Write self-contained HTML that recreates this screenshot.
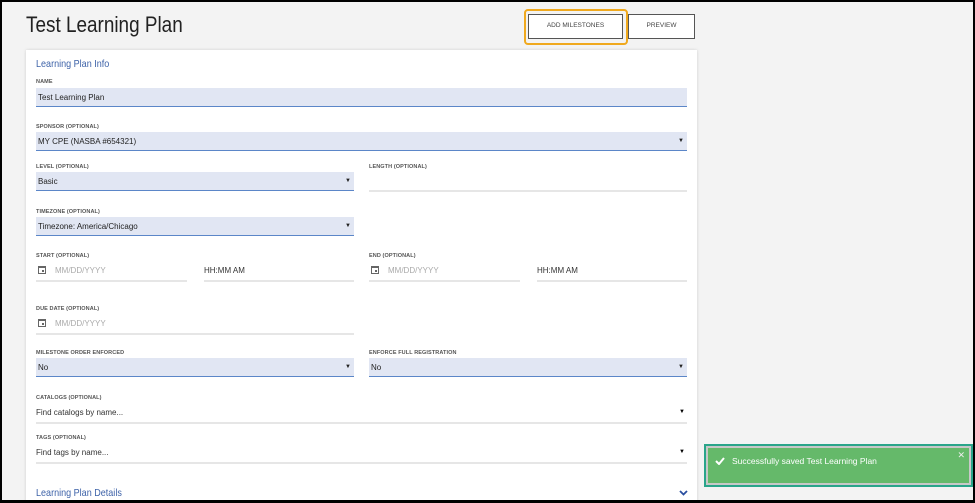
<!DOCTYPE html>
<html><head><style>
*{margin:0;padding:0;box-sizing:border-box}
body{width:975px;height:503px;overflow:hidden;background:#000;font-family:"Liberation Sans",sans-serif;position:relative}
#pg{position:absolute;left:2px;top:2px;width:971px;height:498px;background:#f3f3f3;overflow:hidden}
.a{position:absolute}
.lbl{position:absolute;font-size:5.5px;font-weight:bold;color:#555;letter-spacing:.1px}
.fld{position:absolute;background:#e1e6f3;border-bottom:1.5px solid #5b86c8;height:19px;font-size:8px;color:#222;padding:5px 0 0 2px}
.arr{position:absolute;right:3px;top:6px;font-size:6px;color:#222}
.ul{position:absolute;height:1.5px;background:#e6e6e6}
.ph{position:absolute;font-size:8px;color:#aaa}
.txt{position:absolute;font-size:8px;color:#333}
.cal{position:absolute;width:8px;height:8px;border:1.3px solid #666;border-top-width:2.5px}
.cal:after{content:"";position:absolute;right:1px;bottom:1px;width:2px;height:2px;background:#666}
.nar{transform-origin:0 0;transform:scaleX(.86);white-space:nowrap}
</style></head><body><div id="pg">
<div class="a nar" style="left:24px;top:10px;font-size:22px;color:#222">Test Learning Plan</div>
<div class="a" style="left:522px;top:7px;width:104px;height:36px;border:2px solid #f0a91e;border-radius:4px"></div>
<div class="a" style="left:526px;top:12px;width:95px;height:25px;border:1.5px solid #555;background:#fff;font-size:6.5px;color:#444;text-align:center;line-height:22px">ADD MILESTONES</div>
<div class="a" style="left:626px;top:12px;width:67px;height:25px;border:1.5px solid #555;background:#fff;font-size:6.5px;color:#444;text-align:center;line-height:22px">PREVIEW</div>
<div class="a" style="left:24px;top:48px;width:671px;height:460px;background:#fff;box-shadow:0 0 3px rgba(0,0,0,.15)"></div>
<div class="a nar" style="left:34px;top:56px;font-size:10.5px;color:#3d62a8">Learning Plan Info</div>

<div class="lbl" style="left:34px;top:77px">NAME</div>
<div class="fld" style="left:34px;top:86px;width:651px">Test Learning Plan</div>

<div class="lbl" style="left:34px;top:122px">SPONSOR (OPTIONAL)</div>
<div class="fld" style="left:34px;top:130px;width:651px">MY CPE (NASBA #654321)<span class="arr">▼</span></div>

<div class="lbl" style="left:34px;top:162px">LEVEL (OPTIONAL)</div>
<div class="fld" style="left:34px;top:170px;width:318px">Basic<span class="arr">▼</span></div>
<div class="lbl" style="left:367px;top:162px">LENGTH (OPTIONAL)</div>
<div class="ul" style="left:367px;top:188px;width:318px"></div>

<div class="lbl" style="left:34px;top:207px">TIMEZONE (OPTIONAL)</div>
<div class="fld" style="left:34px;top:215px;width:318px">Timezone: America/Chicago<span class="arr">▼</span></div>

<div class="lbl" style="left:34px;top:251px">START (OPTIONAL)</div>
<div class="cal" style="left:36px;top:264px"></div>
<div class="ph" style="left:53px;top:264px">MM/DD/YYYY</div>
<div class="ul" style="left:34px;top:278px;width:151px"></div>
<div class="txt" style="left:202px;top:264px">HH:MM AM</div>
<div class="ul" style="left:202px;top:278px;width:150px"></div>
<div class="lbl" style="left:367px;top:251px">END (OPTIONAL)</div>
<div class="cal" style="left:369px;top:264px"></div>
<div class="ph" style="left:386px;top:264px">MM/DD/YYYY</div>
<div class="ul" style="left:367px;top:278px;width:151px"></div>
<div class="txt" style="left:535px;top:264px">HH:MM AM</div>
<div class="ul" style="left:535px;top:278px;width:150px"></div>

<div class="lbl" style="left:34px;top:304px">DUE DATE (OPTIONAL)</div>
<div class="cal" style="left:36px;top:317px"></div>
<div class="ph" style="left:53px;top:317px">MM/DD/YYYY</div>
<div class="ul" style="left:34px;top:331px;width:318px"></div>

<div class="lbl" style="left:34px;top:348px">MILESTONE ORDER ENFORCED</div>
<div class="fld" style="left:34px;top:356px;width:318px">No<span class="arr">▼</span></div>
<div class="lbl" style="left:367px;top:348px">ENFORCE FULL REGISTRATION</div>
<div class="fld" style="left:367px;top:356px;width:318px">No<span class="arr">▼</span></div>

<div class="lbl" style="left:34px;top:393px">CATALOGS (OPTIONAL)</div>
<div class="txt" style="left:34px;top:406px">Find catalogs by name...</div>
<div class="a" style="left:677px;top:407px;font-size:6px">▼</div>
<div class="ul" style="left:34px;top:420px;width:651px"></div>

<div class="lbl" style="left:34px;top:433px">TAGS (OPTIONAL)</div>
<div class="txt" style="left:34px;top:446px">Find tags by name...</div>
<div class="a" style="left:677px;top:447px;font-size:6px">▼</div>
<div class="ul" style="left:34px;top:460px;width:651px"></div>

<div class="a nar" style="left:34px;top:485px;font-size:10.5px;color:#3d62a8">Learning Plan Details</div>
<svg class="a" style="left:677px;top:488px" width="9" height="6"><path d="M1 1L4.5 4.5L8 1" stroke="#2a4fa0" stroke-width="1.8" fill="none"/></svg>

<div class="a" style="left:702px;top:442px;width:269px;height:43px;border:2px solid #2aa58a;background:#c8c8c8;padding:2px">
<div style="width:100%;height:100%;background:#65b96a;position:relative">
<svg class="a" style="left:7px;top:9px" width="10" height="8"><path d="M1 4L4 7L9 1" stroke="#fff" stroke-width="2" fill="none"/></svg>
<div class="a" style="left:24px;top:8px;font-size:8.5px;color:#fff">Successfully saved Test Learning Plan</div>
<div class="a" style="right:4px;top:2px;font-size:9px;color:#eee">✕</div>
</div></div>
</div></body></html>
